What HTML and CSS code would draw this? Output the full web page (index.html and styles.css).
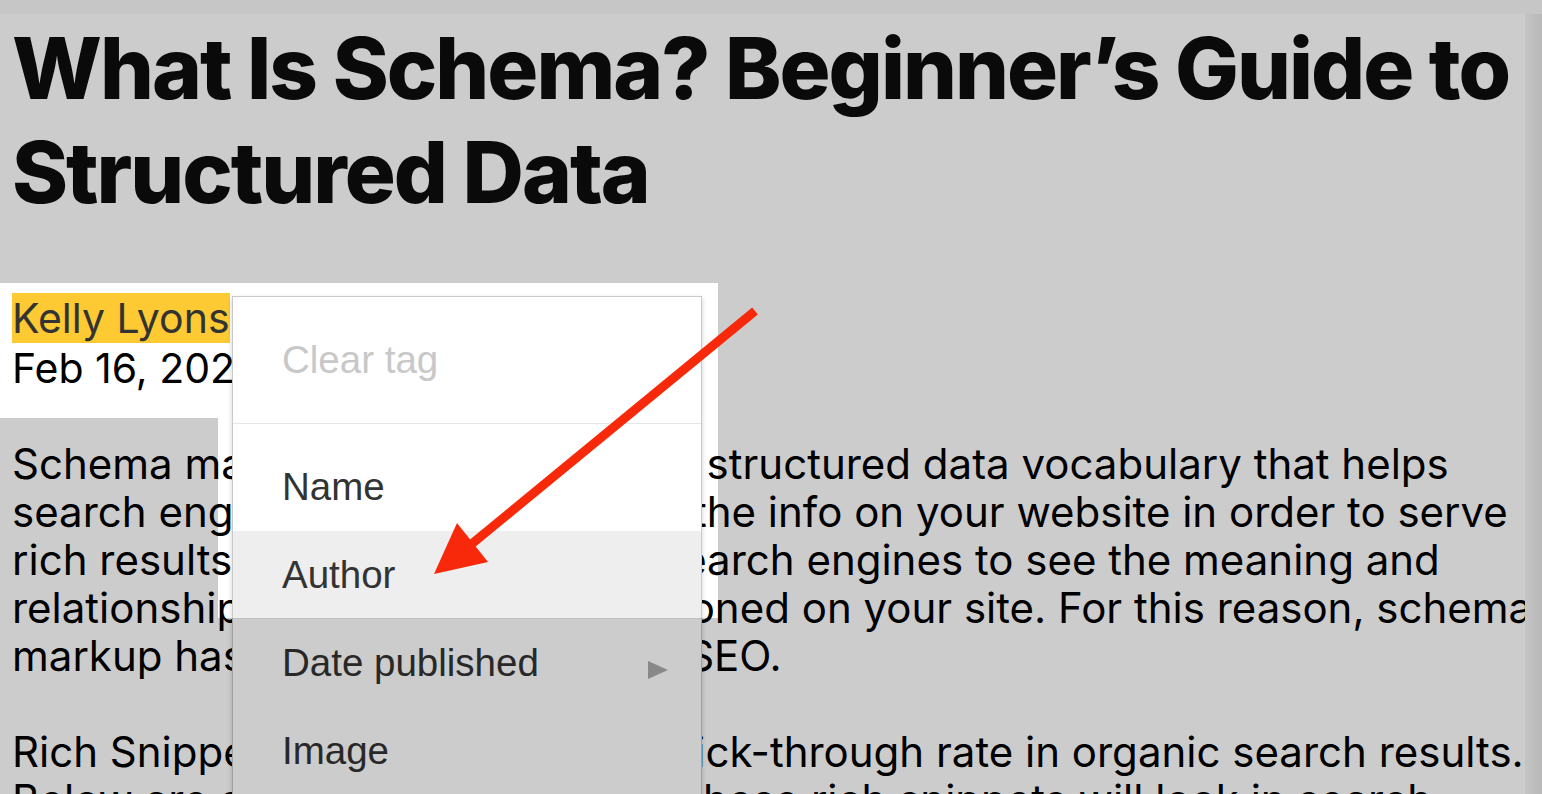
FILE: index.html
```html
<!DOCTYPE html>
<html lang="en">
<head>
<meta charset="utf-8">
<title>What Is Schema? Beginner’s Guide to Structured Data</title>
<link rel="stylesheet" href="styles.css">
</head>
<body>
<div class="screen">
  <div class="topstrip"></div>
  <div class="main">
    <div class="page">
      <h1 class="title">What Is Schema? Beginner’s Guide to<br>Structured Data</h1>
      <div class="byline">
        <span class="author">Kelly Lyons</span>
        <div class="date">Feb 16, 2023</div>
      </div>
      <div class="article">
        <p class="para">
          <span class="line">Schema markup (aka schema) is a structured data vocabulary that helps</span>
          <span class="line">search engines better understand the info on your website in order to serve</span>
          <span class="line">rich results. Markup also assists search engines to see the meaning and</span>
          <span class="line">relationships among entities mentioned on your site. For this reason, schema</span>
          <span class="line">markup has a powerful impact on SEO.</span>
        </p>
        <p class="para">
          <span class="line">Rich Snippets can increase your click-through rate in organic search results.</span>
          <span class="line">Below are some examples of how these rich snippets will look in search</span>
        </p>
      </div>
    </div>
    <div class="edge"></div>
  </div>

  <div class="hole"></div>

  <div class="menu">
    <div class="menu-item disabled">Clear tag</div>
    <div class="menu-sep"></div>
    <div class="menu-item">Name</div>
    <div class="menu-item hover">Author</div>
    <div class="menu-item has-sub">Date published
      <svg class="sub-arrow" width="20" height="18" viewBox="0 0 20 18"><polygon points="0,0 20,9 0,18" fill="#acacac"/></svg>
    </div>
    <div class="menu-item">Image</div>
    <div class="menu-dim"></div>
  </div>

  <svg class="arrow" width="1542" height="794" viewBox="0 0 1542 794">
    <line x1="755" y1="311" x2="468" y2="547" stroke="#f8290a" stroke-width="9"/>
    <polygon points="434,574 457,523 488,562" fill="#f8290a"/>
  </svg>
</div>
</body>
</html>
```

FILE: styles.css
```css
html, body {
  margin: 0;
  padding: 0;
}

body {
  background: #c6c6c6;
}

.screen {
  position: relative;
  width: 1542px;
  height: 794px;
  overflow: hidden;
  display: flex;
  flex-direction: column;
  background: #cccccc;
}

.topstrip {
  height: 14px;
  flex: none;
  background: #c6c6c6;
}

.main {
  flex: 1;
  display: flex;
  min-height: 0;
}

.page {
  position: relative;
  z-index: 1;
  width: 1525px;
  flex: none;
  box-sizing: border-box;
  padding-left: 12px;
  overflow: hidden;
}

.edge {
  flex: 1;
  position: relative;
  z-index: 1;
  background: linear-gradient(90deg, #c4c4c4, #b8b8b8);
}

.title {
  margin: 0;
  padding-top: 3px;
  font-family: "Inter", "Liberation Sans", sans-serif;
  font-weight: 800;
  font-size: 85px;
  line-height: 104px;
  letter-spacing: -2px;
  color: #0a0a0a;
  white-space: nowrap;
}

.byline {
  margin: 58px 0 0 -12px;
  width: 718px;
  box-sizing: border-box;
  padding: 10px 0 25px 12px;
  background: #ffffff;
  font-family: "Inter", "Liberation Sans", sans-serif;
  font-size: 41px;
  line-height: 50px;
}

.author {
  display: inline-block;
  background: #fdca33;
  color: #333333;
}

.date {
  color: #000000;
}

.article {
  padding-top: 22px;
  font-family: "Inter", "Liberation Sans", sans-serif;
  font-size: 42px;
  line-height: 48px;
  color: #000000;
}

.para {
  margin: 0 0 48px;
}

.line {
  display: block;
  white-space: nowrap;
}

.hole {
  position: absolute;
  left: 218px;
  top: 283px;
  width: 500px;
  height: 335px;
  background: #ffffff;
  z-index: 0;
}

.menu {
  position: absolute;
  z-index: 2;
  left: 232px;
  top: 296px;
  width: 470px;
  box-sizing: border-box;
  padding-top: 19px;
  background: #ffffff;
  border: 1px solid #c9c9c9;
  box-shadow: 0 2px 5px rgba(0, 0, 0, 0.18);
  font-family: "Liberation Sans", Arial, sans-serif;
  font-size: 38.5px;
}

.menu-item {
  position: relative;
  height: 88px;
  line-height: 88px;
  padding-left: 49px;
  color: #333333;
  white-space: nowrap;
}

.menu-item.disabled {
  color: #c8c8c8;
}

.menu-item.hover {
  background: #eeeeee;
}

.menu-sep {
  height: 1px;
  margin: 19px 0;
  background: #e6e6e6;
}

.sub-arrow {
  position: absolute;
  left: 415px;
  top: 42px;
}

.menu-dim {
  position: absolute;
  left: -1px;
  right: -1px;
  top: 321px;
  bottom: -1px;
  background: rgba(0, 0, 0, 0.2);
}

.arrow {
  position: absolute;
  left: 0;
  top: 0;
  z-index: 3;
  pointer-events: none;
}
```
